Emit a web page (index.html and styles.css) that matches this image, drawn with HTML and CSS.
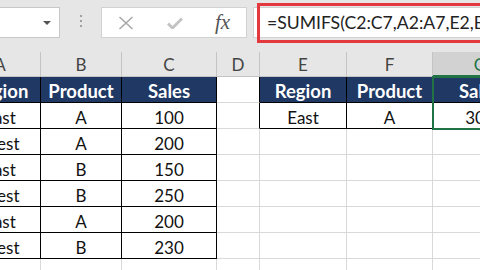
FILE: index.html
```html
<!DOCTYPE html>
<html>
<head>
<meta charset="utf-8">
<link rel="stylesheet" href="styles.css">
</head>
<body>
<div class="app">
  <div class="toolbar">
    <div class="namebox"><span class="caret"></span></div>
    <div class="grip"><i></i><i></i><i></i></div>
    <div class="fxbox">
      <svg class="ico" width="16" height="14" viewBox="0 0 16 14"><path d="M1.5 1 L14.5 13 M14.5 1 L1.5 13" stroke="#a9a9a9" stroke-width="1.6" fill="none"/></svg>
      <svg class="ico" width="16" height="12" viewBox="0 0 16 12"><path d="M1 6.5 L5.5 11 L15 1.5" stroke="#c4c4c4" stroke-width="3" fill="none"/></svg>
      <span class="fx">fx</span>
    </div>
    <div class="input">=SUMIFS(C2:C7,A2:A7,E2,B2:B7,F2)</div>
    <div class="highlight"></div>
  </div>
  <div class="sheet">
    <div class="c col">A</div><div class="c col">B</div><div class="c col">C</div><div class="c col">D</div><div class="c col">E</div><div class="c col">F</div><div class="c col sel">G</div>

    <div class="c th">Region</div><div class="c th">Product</div><div class="c th">Sales</div><div class="c edge"></div><div class="c th">Region</div><div class="c th">Product</div><div class="c th">Sales</div>

    <div class="c td">East</div><div class="c td">A</div><div class="c td">100</div><div class="c edge"></div><div class="c td">East</div><div class="c td">A</div><div class="c td">300</div>

    <div class="c td">West</div><div class="c td">A</div><div class="c td">200</div><div class="c"></div><div class="c"></div><div class="c"></div><div class="c"></div>

    <div class="c td">East</div><div class="c td">B</div><div class="c td">150</div><div class="c"></div><div class="c"></div><div class="c"></div><div class="c"></div>

    <div class="c td">West</div><div class="c td">B</div><div class="c td">250</div><div class="c"></div><div class="c"></div><div class="c"></div><div class="c"></div>

    <div class="c td">East</div><div class="c td">A</div><div class="c td">200</div><div class="c"></div><div class="c"></div><div class="c"></div><div class="c"></div>

    <div class="c td">West</div><div class="c td">B</div><div class="c td">230</div><div class="c"></div><div class="c"></div><div class="c"></div><div class="c"></div>

    <div class="c"></div><div class="c"></div><div class="c"></div><div class="c"></div><div class="c"></div><div class="c"></div><div class="c"></div>
  </div>
  <div class="selection"></div>
</div>
</body>
</html>
```

FILE: styles.css
```css
html, body {
  margin: 0;
  padding: 0;
}
body {
  width: 480px;
  height: 270px;
  overflow: hidden;
  background: #ffffff;
}
.app {
  position: relative;
  width: 480px;
  height: 270px;
  overflow: hidden;
  font-family: Lato, "Open Sans", sans-serif;
}
.toolbar {
  position: relative;
  display: flex;
  align-items: flex-start;
  height: 52px;
  padding-top: 7px;
  box-sizing: border-box;
  background: #e6e6e6;
}
.namebox {
  width: 60px;
  height: 31px;
  box-sizing: border-box;
  background: #ffffff;
  border: 1px solid #c8c8c8;
  border-left: none;
  display: flex;
  justify-content: flex-end;
  align-items: center;
  padding-right: 8px;
}
.caret {
  width: 0;
  height: 0;
  border-left: 4px solid transparent;
  border-right: 4px solid transparent;
  border-top: 4px solid #555555;
}
.grip {
  width: 41px;
  display: flex;
  flex-direction: column;
  align-items: center;
  gap: 3px;
  padding-top: 8px;
}
.grip i {
  display: block;
  width: 2px;
  height: 2px;
  background: #a0a0a0;
}
.fxbox {
  width: 146px;
  height: 31px;
  box-sizing: border-box;
  background: #ffffff;
  border: 1px solid #d2d2d2;
  display: flex;
  align-items: center;
  padding-left: 16px;
  gap: 33px;
}
.ico {
  display: block;
}
.fx {
  font-family: "Liberation Serif", serif;
  font-style: italic;
  font-size: 21px;
  color: #555555;
  line-height: 1;
  margin-left: -1px;
}
.input {
  flex: 1;
  margin-left: 6px;
  height: 31px;
  box-sizing: border-box;
  background: #ffffff;
  border: 1px solid #d2d2d2;
  border-right: none;
  padding-left: 13px;
  font-size: 17.6px;
  line-height: 29px;
  color: #222222;
  white-space: nowrap;
  overflow: hidden;
}
.highlight {
  position: absolute;
  left: 257px;
  top: 3px;
  width: 240px;
  height: 40px;
  box-sizing: border-box;
  border: 3px solid #e3393e;
}
.sheet {
  display: grid;
  grid-template-columns: 81px 81px 95px 43px 87px 86px 95px;
  grid-template-rows: 25px;
  grid-auto-rows: 26px;
  margin-left: -40px;
}
.c {
  box-sizing: border-box;
  border-right: 1px solid #d9d9d9;
  border-bottom: 1px solid #d9d9d9;
  display: flex;
  align-items: center;
  justify-content: center;
  font-size: 17px;
  color: #111111;
  padding-top: 3px;
  white-space: nowrap;
  overflow: hidden;
}
.col {
  background: #e6e6e6;
  color: #444444;
  border-right: 1px solid #c4c4c4;
  border-bottom: 1px solid #c4c4c4;
  padding-top: 1px;
}
.col.sel {
  background: #d2d2d2;
  color: #217346;
  border-bottom: 2px solid #217346;
}
.th {
  background: #203864;
  color: #ffffff;
  font-weight: 700;
  font-size: 18.5px;
  border-right: 1px solid #000000;
  border-bottom: 1px solid #000000;
}
.td {
  border-right: 1px solid #000000;
  border-bottom: 1px solid #000000;
}
.edge {
  border-right: 1px solid #000000;
}
.selection {
  position: absolute;
  left: 432px;
  top: 76px;
  width: 60px;
  height: 54px;
  box-sizing: border-box;
  border: 2px solid #217346;
}
```
